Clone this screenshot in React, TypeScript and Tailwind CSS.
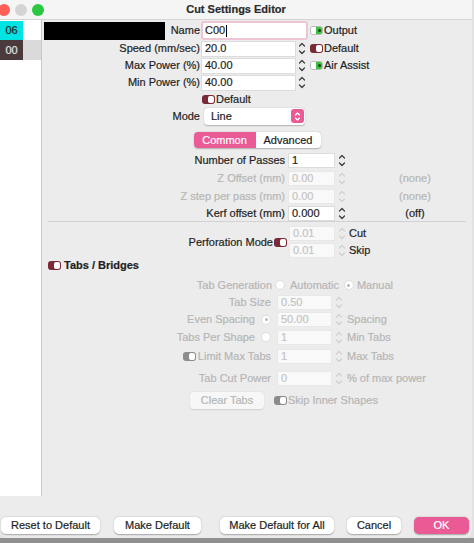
import React from "react";

type ToggleKind = "red" | "green" | "gray";

function Toggle({ kind }: { kind: ToggleKind }) {
  if (kind === "green") {
    return (
      <span className="flex h-[9px] w-[13px] shrink-0 overflow-hidden rounded-[3px] border border-[#b9b9b9]">
        <span className="h-full w-[5px] bg-white" />
        <span className="flex flex-1 items-center justify-center bg-[#3cc23c]">
          <span className="h-[3px] w-[3px] rounded-full bg-[#174317]" />
        </span>
      </span>
    );
  }
  const bg = kind === "red" ? "bg-[#7a2a37]" : "bg-[#8c8c8c]";
  return (
    <span className={`flex h-[9px] w-[13px] shrink-0 items-center justify-end rounded-[3px] p-[1px] ${bg}`}>
      <span className="h-[7px] w-[6px] rounded-[2px] bg-white" />
    </span>
  );
}

function Spinner({ dim }: { dim?: boolean }) {
  const c = dim ? "#d0d0d0" : "#3a3a3a";
  return (
    <svg width="8" height="15" viewBox="0 0 8 15" fill="none" stroke={c} strokeWidth="1.2" strokeLinecap="round" strokeLinejoin="round" className="shrink-0">
      <path d="M1.5 5 L4 2.5 L6.5 5" />
      <path d="M1.5 10 L4 12.5 L6.5 10" />
    </svg>
  );
}

function Radio({ on }: { on?: boolean }) {
  return (
    <span className="flex h-[10px] w-[10px] shrink-0 items-center justify-center rounded-full border border-[#dedede] bg-white">
      {on && <span className="h-[3px] w-[3px] rounded-full bg-[#b8b8b8]" />}
    </span>
  );
}

function Field({ value, w, dim, h = "h-[15px]" }: { value: string; w: string; dim?: boolean; h?: string }) {
  return (
    <span
      className={`flex ${h} ${w} shrink-0 items-center border px-[3px] ${
        dim ? "border-[#e8e8e8] bg-[#f9f9f9] text-[#c4c4c4]" : "border-[#dcdcdc] bg-white text-[#1e1e1e]"
      }`}
    >
      {value}
    </span>
  );
}

function Button({ label, w, pink }: { label: string; w: string; pink?: boolean }) {
  return (
    <button
      className={`flex h-[17px] ${w} items-center justify-center rounded-[5px] ${
        pink
          ? "bg-[#ea5a95] text-white shadow-[0_0.5px_1.5px_rgba(0,0,0,0.3)]"
          : "bg-white text-[#1e1e1e] shadow-[0_0.5px_1.5px_rgba(0,0,0,0.3)]"
      }`}
    >
      {label}
    </button>
  );
}

export default function App() {
  return (
    <div className="flex h-[543px] w-[474px] flex-col bg-[#e2e2e2] font-['Liberation_Sans',Arial,sans-serif] text-[11px] leading-none text-[#1e1e1e] [-webkit-text-stroke-width:0.2px]">
      <div className="flex h-[538px] w-[472px] flex-col overflow-hidden rounded-b-[8px] bg-[#ececec]">
        {/* Title bar */}
        <div className="grid h-[20px] grid-cols-[1fr_auto_1fr] items-center border-b border-[#d4d4d4] bg-[#f5f5f5]">
          <div className="ml-[-2px] flex items-center gap-[5px]">
            <span className="h-[12px] w-[12px] rounded-full bg-[#fe5f57]" />
            <span className="h-[12px] w-[12px] rounded-full bg-[#d4d4d4]" />
            <span className="h-[12px] w-[12px] rounded-full bg-[#2ac840]" />
          </div>
          <span className="font-bold text-[#2b2b2b]">Cut Settings Editor</span>
          <div />
        </div>

        {/* Body */}
        <div className="flex h-[476px]">
          {/* Layer list */}
          <div className="w-[42px] shrink-0 border-r border-[#c9c9c9] bg-white pt-[1px]">
            <div className="flex h-[19px]">
              <span className="flex w-[23px] items-center justify-center bg-[#00e3e3] text-[#1e1e1e]">06</span>
            </div>
            <div className="flex h-[20px] bg-[#dadada]">
              <span className="flex w-[23px] items-center justify-center bg-[#4a3a3b] text-[#e6e6e6]">00</span>
            </div>
          </div>

          {/* Main form */}
          <div className="flex flex-1 flex-col">
            {/* Name */}
            <div className="mt-[1px] flex h-[19px] items-center">
              <div className="flex w-[158px] items-center justify-between pl-[2px]">
                <span className="h-[18px] w-[121px] bg-black" />
                <span>Name</span>
              </div>
              <span className="ml-[1px] flex h-[19px] w-[107px] items-center rounded-[3px] border-2 border-[#eec5d5] bg-white px-[2px]">
                C00<span className="ml-[1px] h-[12px] w-px bg-black" />
              </span>
              <span className="ml-[2px]">
                <Toggle kind="green" />
              </span>
              <span className="ml-[1px]">Output</span>
            </div>

            {/* Speed / Power */}
            {[
              { label: "Speed (mm/sec)", value: "20.0", extra: "red", text: "Default" },
              { label: "Max Power (%)", value: "40.00", extra: "green", text: "Air Assist" },
              { label: "Min Power (%)", value: "40.00" },
            ].map((r) => (
              <div key={r.label} className="flex h-[17px] items-center">
                <span className="w-[158px] text-right">{r.label}</span>
                <span className="ml-[1px]">
                  <Field value={r.value} w="w-[95px]" h="h-[16px]" />
                </span>
                <span className="ml-[2px]">
                  <Spinner />
                </span>
                {r.extra && (
                  <>
                    <span className="ml-[4px]">
                      <Toggle kind={r.extra as ToggleKind} />
                    </span>
                    <span className="ml-[1px]">{r.text}</span>
                  </>
                )}
              </div>
            ))}

            {/* Default */}
            <div className="flex h-[16px] items-center pl-[160px]">
              <Toggle kind="red" />
              <span className="ml-[1px]">Default</span>
            </div>

            {/* Mode */}
            <div className="flex h-[18px] items-center">
              <span className="w-[158px] text-right">Mode</span>
              <span className="ml-[4px] flex h-[17px] w-[101px] items-center justify-between rounded-[4px] bg-white pl-[7px] pr-[1px] shadow-[0_0.5px_1.5px_rgba(0,0,0,0.25)]">
                Line
                <span className="flex h-[14px] w-[13px] items-center justify-center rounded-[3px] bg-[#ea5a95]">
                  <svg width="7" height="11" viewBox="0 0 7 11" fill="none" stroke="white" strokeWidth="1.3" strokeLinecap="round" strokeLinejoin="round">
                    <path d="M1.5 4 L3.5 2 L5.5 4" />
                    <path d="M1.5 7 L3.5 9 L5.5 7" />
                  </svg>
                </span>
              </span>
            </div>

            {/* Segmented control */}
            <div className="mt-[7px] flex justify-center">
              <div className="flex h-[16px] overflow-hidden rounded-[4px] bg-white shadow-[0_0.5px_1.5px_rgba(0,0,0,0.25)]">
                <span className="flex w-[62px] items-center justify-center bg-[#ea5a95] text-white">Common</span>
                <span className="flex w-[65px] items-center justify-center">Advanced</span>
              </div>
            </div>

            {/* Passes / offsets */}
            <div className="mt-[3px] flex flex-col">
              {[
                { label: "Number of Passes", value: "1", h: "h-[18px]" },
                { label: "Z Offset (mm)", value: "0.00", dim: true, note: "(none)", h: "h-[18px]" },
                { label: "Z step per pass (mm)", value: "0.00", dim: true, note: "(none)", h: "h-[18px]" },
                { label: "Kerf offset (mm)", value: "0.000", note: "(off)", h: "h-[16px]" },
              ].map((r) => (
                <div key={r.label} className={`flex ${r.h} items-center`}>
                  <span className={`w-[243px] text-right ${r.dim ? "text-[#b6b6b6]" : ""}`}>{r.label}</span>
                  <span className="ml-[3px]">
                    <Field value={r.value} w="w-[47px]" dim={r.dim} />
                  </span>
                  <span className="ml-[3px]">
                    <Spinner dim={r.dim} />
                  </span>
                  {r.note && (
                    <span className={`ml-[39px] w-[60px] text-center ${r.dim ? "text-[#b6b6b6]" : ""}`}>{r.note}</span>
                  )}
                </div>
              ))}
            </div>

            <div className="mx-[6px] h-px bg-[#d2d2d2]" />

            {/* Perforation */}
            <div className="mt-[3px] flex items-center">
              <div className="flex w-[245px] items-center justify-end">
                <span>Perforation Mode</span>
                <span className="ml-[1px]">
                  <Toggle kind="red" />
                </span>
              </div>
              <div className="flex flex-col">
                {["Cut", "Skip"].map((t) => (
                  <div key={t} className="flex h-[17px] items-center">
                    <span className="ml-[2px]">
                      <Field value="0.01" w="w-[46px]" dim />
                    </span>
                    <span className="ml-[3px]">
                      <Spinner dim />
                    </span>
                    <span className="ml-[3px]">{t}</span>
                  </div>
                ))}
              </div>
            </div>

            {/* Tabs / Bridges */}
            <div className="flex h-[12px] items-center pl-[6px]">
              <Toggle kind="red" />
              <span className="ml-[3px] font-bold">Tabs / Bridges</span>
            </div>

            <div className="mt-[5px] flex flex-col text-[#b6b6b6]">
              <div className="flex h-[18px] items-center">
                <span className="w-[230px] text-right">Tab Generation</span>
                <span className="ml-[3px]">
                  <Radio />
                </span>
                <span className="ml-[5px]">Automatic</span>
                <span className="ml-[5px]">
                  <Radio on />
                </span>
                <span className="ml-[3px]">Manual</span>
              </div>

              {[
                { label: "Tab Size", value: "0.50", h: "h-[17px]" },
                { label: "Even Spacing", value: "50.00", radio: "on", after: "Spacing", h: "h-[17px]" },
                { label: "Tabs Per Shape", value: "1", radio: "off", after: "Min Tabs", h: "h-[18px]" },
                { label: "Limit Max Tabs", value: "1", toggle: true, after: "Max Tabs", h: "h-[21px]" },
                { label: "Tab Cut Power", value: "0", after: "% of max power", h: "h-[22px]" },
              ].map((r) => (
                <div key={r.label} className={`flex ${r.h} items-center`}>
                  <div className="flex w-[230px] items-center justify-end pr-[1px]">
                    {r.toggle && (
                      <span className="mr-[2px]">
                        <Toggle kind="gray" />
                      </span>
                    )}
                    <span>{r.label}</span>
                    {r.radio && (
                      <span className="ml-[6px]">
                        <Radio on={r.radio === "on"} />
                      </span>
                    )}
                  </div>
                  <span className="ml-[5px]">
                    <Field value={r.value} w="w-[55px]" dim />
                  </span>
                  <span className="ml-[3px]">
                    <Spinner dim />
                  </span>
                  {r.after && <span className="ml-[4px]">{r.after}</span>}
                </div>
              ))}

              <div className="mt-[3px] flex h-[17px] items-center">
                <div className="flex w-[230px] justify-end pr-[8px]">
                  <span className="flex h-[17px] w-[74px] items-center justify-center rounded-[4px] bg-[#f7f7f7] shadow-[0_0.5px_1.5px_rgba(0,0,0,0.12)]">
                    Clear Tabs
                  </span>
                </div>
                <span className="ml-[2px]">
                  <Toggle kind="gray" />
                </span>
                <span className="ml-[1px]">Skip Inner Shapes</span>
              </div>
            </div>
          </div>
        </div>

        {/* Footer */}
        <div className="flex items-center pl-[1px] pt-[21px]">
          <Button label="Reset to Default" w="w-[99px]" />
          <span className="ml-[14px]">
            <Button label="Make Default" w="w-[87px]" />
          </span>
          <span className="ml-[19px]">
            <Button label="Make Default for All" w="w-[114px]" />
          </span>
          <span className="ml-[13px]">
            <Button label="Cancel" w="w-[54px]" />
          </span>
          <span className="ml-[13px]">
            <Button label="OK" w="w-[55px]" pink />
          </span>
        </div>
      </div>
      <div className="flex-1 bg-[#8f8f8f]" />
    </div>
  );
}
